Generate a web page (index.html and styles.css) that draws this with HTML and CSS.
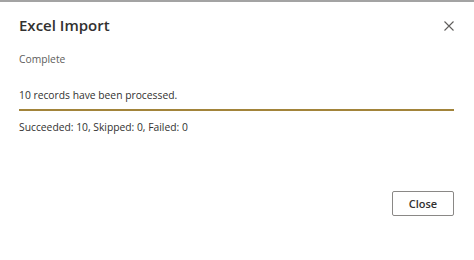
FILE: index.html
```html
<!DOCTYPE html>
<html>
<head>
<meta charset="utf-8">
<link rel="stylesheet" href="styles.css">
</head>
<body>
<div class="dialog">
  <div class="header">
    <h1 class="title">Excel Import</h1>
    <button class="close-x" aria-label="Close">
      <svg width="10" height="10" viewBox="0 0 10 10"><path d="M0.5 0.5L9.5 9.5M9.5 0.5L0.5 9.5" stroke="#605e5c" stroke-width="1.1" fill="none"/></svg>
    </button>
  </div>
  <div class="status">Complete</div>
  <div class="message">10 records have been processed.</div>
  <div class="progress"><div class="progress-fill"></div></div>
  <div class="summary">Succeeded: 10, Skipped: 0, Failed: 0</div>
  <div class="footer">
    <button class="btn">Close</button>
  </div>
</div>
</body>
</html>
```

FILE: styles.css
```css
html, body {
  margin: 0;
  padding: 0;
  background: #ffffff;
}
body {
  width: 474px;
  height: 260px;
  overflow: hidden;
  font-family: "Open Sans", "Noto Sans", sans-serif;
  color: #323130;
}
.dialog {
  box-sizing: border-box;
  height: 260px;
  border-top: 2px solid #a3a3a3;
  padding: 0 20px 0 19px;
  display: flex;
  flex-direction: column;
}
.header {
  display: flex;
  justify-content: space-between;
  align-items: flex-start;
  height: 46px;
}
.title {
  margin: 13px 0 0 0;
  font-size: 15px;
  font-weight: 600;
  line-height: 20px;
  color: #323130;
}
.close-x {
  margin-top: 19px;
  margin-right: 0;
  padding: 0;
  border: 0;
  background: transparent;
  width: 10px;
  height: 10px;
  display: flex;
}
.status {
  font-size: 10.3px;
  line-height: 14px;
  color: #605e5c;
  margin-top: 4px;
}
.message {
  font-size: 10.3px;
  line-height: 14px;
  margin-top: 22px;
}
.progress {
  margin-top: 7px;
  height: 2px;
  background: #f3f2f1;
}
.progress-fill {
  height: 2px;
  width: 100%;
  background: #a2843a;
}
.summary {
  font-size: 10.3px;
  line-height: 14px;
  margin-top: 9px;
}
.footer {
  display: flex;
  justify-content: flex-end;
  margin-top: 57px;
}
.btn {
  box-sizing: border-box;
  width: 62px;
  height: 25px;
  border: 1px solid #8a8886;
  border-radius: 2px;
  background: #ffffff;
  font-family: "Open Sans", "Noto Sans", sans-serif;
  font-size: 11px;
  font-weight: 600;
  color: #323130;
  padding: 0;
}
```
